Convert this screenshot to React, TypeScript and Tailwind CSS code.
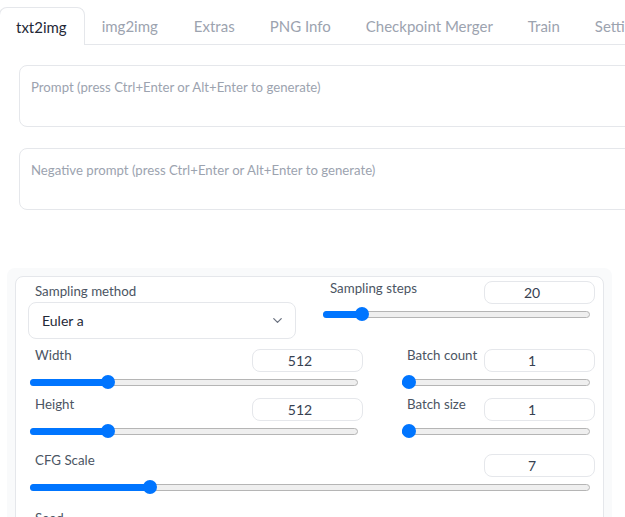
import { ChevronDown } from "lucide-react";

const FONT = "font-['Lato','Noto_Sans',sans-serif]";

const tabs = ["txt2img", "img2img", "Extras", "PNG Info", "Checkpoint Merger", "Train", "Settings"];

function Slider({ value, min, max, className }: { value: number; min: number; max: number; className?: string }) {
  const frac = (value - min) / (max - min);
  const pos = `calc(7px + ${frac} * (100% - 14px))`;
  return (
    <div className={`relative h-[14px] flex items-center ${className ?? ""}`}>
      <div className="relative h-[7px] w-full rounded-full border border-[#b5b5b5] bg-[#efefef]" />
      <div className="absolute left-0 h-[7px] rounded-l-full bg-[#0075ff]" style={{ width: pos }} />
      <div
        className="absolute top-0 h-[14px] w-[14px] -translate-x-1/2 rounded-full bg-[#0075ff]"
        style={{ left: pos }}
      />
    </div>
  );
}

function NumberBox({ value }: { value: string }) {
  return (
    <div className="flex h-[23px] w-[111px] items-center justify-center rounded-lg border border-[#e5e7eb] bg-white pr-[15px] text-[14px] text-[#374151]">
      {value}
    </div>
  );
}

function Label({ children, className }: { children: string; className?: string }) {
  return (
    <span className={`block pl-[7px] text-[13.3px] leading-5 text-[#4b5563] ${className ?? ""}`}>{children}</span>
  );
}

function SliderRow({
  label,
  value,
  min,
  max,
}: {
  label: string;
  value: number;
  min: number;
  max: number;
}) {
  return (
    <div className="flex flex-col">
      <div className="flex items-start justify-between">
        <Label className="-mt-[4px]">{label}</Label>
        <NumberBox value={String(value)} />
      </div>
      <Slider value={value} min={min} max={max} className="mt-[3px] ml-[2px] mr-[5px]" />
    </div>
  );
}

export default function App() {
  return (
    <div className={`h-[517px] w-[625px] overflow-hidden bg-white ${FONT}`}>
      <div className="flex h-[45px] items-end border-b border-[#e5e7eb] pt-2 whitespace-nowrap">
        {tabs.map((t, i) =>
          i === 0 ? (
            <div
              key={t}
              className="-mb-px -ml-px flex h-[38px] shrink-0 items-center rounded-t-lg border border-b-0 border-[#e5e7eb] bg-white pt-[2px] pl-[16px] pr-[17px] text-[15px] text-[#1f2937]"
            >
              {t}
            </div>
          ) : (
            <div
              key={t}
              className={`flex h-[37px] shrink-0 items-center pt-[2px] text-[15px] text-[#9ca3af] ${
                i === 1 ? "pl-[17px] pr-[18px]" : "pl-[18px] pr-[17px]"
              }`}
            >
              {t}
            </div>
          )
        )}
      </div>

      <div className="ml-[19px] mt-[20px] flex w-[700px] flex-col gap-[21px]">
        <div className="h-[62px] rounded-lg border border-[#e5e7eb] px-[11px] pt-[11px] text-[13.2px] leading-5 text-[#9ca3af]">
          Prompt (press Ctrl+Enter or Alt+Enter to generate)
        </div>
        <div className="h-[62px] rounded-lg border border-[#e5e7eb] px-[11px] pt-[11px] text-[13.2px] leading-5 text-[#9ca3af]">
          Negative prompt (press Ctrl+Enter or Alt+Enter to generate)
        </div>
      </div>

      <div className="ml-[7px] mt-[58px] w-[605px] rounded-lg bg-[#f9fafb] px-[8px] pt-[8px] pb-4">
        <div className="rounded-lg border border-[#e5e7eb] bg-white pl-[12px] pr-[8px] pt-[4px] pb-6">
          <div className="flex gap-[27px]">
            <div className="flex w-[268px] flex-col">
              <Label>Sampling method</Label>
              <div className="mt-[1px] flex h-[37px] items-center justify-between rounded-lg border border-[#e5e7eb] bg-white pl-[13px] pr-[10px] text-[14px] text-[#1f2937]">
                <span>Euler a</span>
                <ChevronDown size={15} strokeWidth={2} className="text-[#6b7280]" />
              </div>
            </div>
            <div className="flex flex-1 flex-col">
              <div className="flex items-start justify-between">
                <Label className="-mt-[3px] pl-0">Sampling steps</Label>
                <NumberBox value="20" />
              </div>
              <Slider value={20} min={1} max={150} className="mt-[3px] mr-[5px]" />
            </div>
          </div>

          <div className="mt-[10px] flex gap-[37px]">
            <div className="flex w-[335px] flex-col gap-[9px]">
              <SliderRow label="Width" value={512} min={64} max={2048} />
              <SliderRow label="Height" value={512} min={64} max={2048} />
            </div>
            <div className="flex flex-1 flex-col gap-[9px]">
              <SliderRow label="Batch count" value={1} min={1} max={100} />
              <SliderRow label="Batch size" value={1} min={1} max={8} />
            </div>
          </div>

          <div className="mt-[16px]">
            <SliderRow label="CFG Scale" value={7} min={1} max={30} />
          </div>

          <div className="mt-[14px]">
            <Label>Seed</Label>
          </div>
        </div>
      </div>
    </div>
  );
}
